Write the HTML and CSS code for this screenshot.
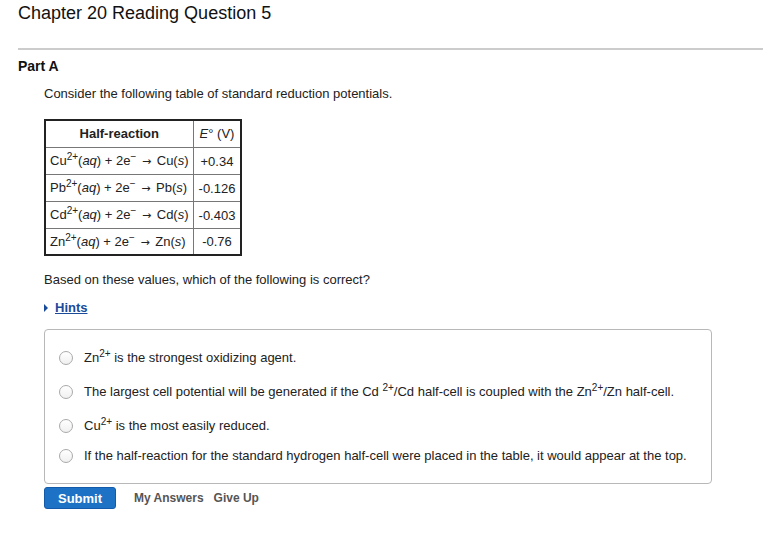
FILE: index.html
```html
<!DOCTYPE html>
<html>
	<head>
		<meta charset="utf-8">
		<title>Chapter 20 Reading Question 5</title>
		<link rel="stylesheet" href="styles.css">
	</head>
	<body>
		<h1 class="title">Chapter 20 Reading Question 5</h1>
		<div class="part">
			<h2 class="partTitle">Part A</h2>
			<div class="question">
				<p class="intro">Consider the following table of standard reduction potentials.</p>
				<table class="potentials">
					<tr>
						<th>Half-reaction</th>
						<th class="ev"><i>E</i>&deg; (V)</th>
					</tr>
					<tr>
						<td>Cu<sup>2+</sup>(<i>aq</i>) + 2e<sup>&minus;</sup> <span class="to">&rarr;</span> Cu(<i>s</i>)</td>
						<td class="val">+0.34</td>
					</tr>
					<tr>
						<td>Pb<sup>2+</sup>(<i>aq</i>) + 2e<sup>&minus;</sup> <span class="to">&rarr;</span> Pb(<i>s</i>)</td>
						<td class="val">-0.126</td>
					</tr>
					<tr>
						<td>Cd<sup>2+</sup>(<i>aq</i>) + 2e<sup>&minus;</sup> <span class="to">&rarr;</span> Cd(<i>s</i>)</td>
						<td class="val">-0.403</td>
					</tr>
					<tr>
						<td>Zn<sup>2+</sup>(<i>aq</i>) + 2e<sup>&minus;</sup> <span class="to">&rarr;</span> Zn(<i>s</i>)</td>
						<td class="val">-0.76</td>
					</tr>
				</table>
				<p class="ask">Based on these values, which of the following is correct?</p>
				<a class="hints" href="#"><span class="arrow"></span>Hints</a>
				<div class="choices">
					<label class="choice"><span class="radio"></span><span>Zn<sup>2+</sup> is the strongest oxidizing agent.</span></label>
					<label class="choice"><span class="radio"></span><span>The largest cell potential will be generated if the Cd <sup>2+</sup>/Cd half-cell is coupled with the Zn<sup>2+</sup>/Zn half-cell.</span></label>
					<label class="choice"><span class="radio"></span><span>Cu<sup>2+</sup> is the most easily reduced.</span></label>
					<label class="choice last"><span class="radio"></span><span>If the half-reaction for the standard hydrogen half-cell were placed in the table, it would appear at the top.</span></label>
				</div>
				<div class="actions">
					<button class="submit">Submit</button>
					<a class="link" href="#">My Answers</a>
					<a class="link" href="#">Give Up</a>
				</div>
			</div>
		</div>
	</body>
</html>
```

FILE: styles.css
```css
* {
	margin: 0;
	padding: 0;
	box-sizing: border-box;
}

body {
	font-family: "Liberation Sans", Arial, sans-serif;
	color: #222;
	background: #fff;
	font-size: 13px;
}

sup {
	font-size: 10px;
	line-height: 0;
	vertical-align: 5px;
}

.title {
	font-size: 18px;
	font-weight: normal;
	color: #111;
	line-height: 24px;
	padding-top: 1px;
	height: 50px;
	border-bottom: 2px solid #ccc;
	margin-left: 18px;
}

.part {
	padding: 8px 0 0 18px;
}

.partTitle {
	font-size: 14px;
	font-weight: bold;
	color: #111;
	line-height: 17px;
}

.question {
	padding-left: 26px;
}

.intro {
	margin-top: 11px;
	line-height: 16px;
}

/* 电位表 */
.potentials {
	margin-top: 17px;
	border-collapse: collapse;
	border: 2px solid #222;
	font-size: 13px;
}

.potentials th,
.potentials td {
	border: 1px solid #777;
	padding: 0 4px;
	line-height: 15px;
}

.potentials th {
	height: 27px;
	font-weight: bold;
	text-align: center;
}

.potentials th.ev {
	font-weight: normal;
}

.potentials td {
	height: 27px;
	padding-top: 1px;
}

.potentials td.val {
	text-align: center;
	padding: 1px 5px 0;
}

.potentials .to {
	font-family: "DejaVu Sans", sans-serif;
	font-size: 11px;
	margin: 0 2px;
}

.ask {
	margin-top: 16px;
	line-height: 16px;
}

.hints {
	display: inline-flex;
	align-items: center;
	margin-top: 12px;
	font-weight: bold;
	color: #1a4a9a;
	text-decoration: underline;
	line-height: 16px;
}

.hints .arrow {
	width: 0;
	height: 0;
	border-top: 4px solid transparent;
	border-bottom: 4px solid transparent;
	border-left: 4px solid #1a4a9a;
	margin-right: 7px;
}

/* 选项框 */
.choices {
	margin-top: 13px;
	width: 668px;
	border: 1px solid #b8b8b8;
	border-radius: 4px;
	padding: 19px 0 19px 14px;
	display: flex;
	flex-direction: column;
	gap: 16px;
}

.choice {
	display: flex;
	align-items: center;
	line-height: 18px;
}

/* 最后一项没有上标,行更矮 */
.choice.last {
	margin-top: -3px;
	line-height: 16px;
}

.radio {
	width: 14px;
	height: 14px;
	border: 1px solid #aaa;
	border-radius: 50%;
	background: linear-gradient(#fff, #f0f0f0);
	margin-right: 11px;
	flex-shrink: 0;
}

.actions {
	display: flex;
	align-items: center;
	margin-top: 3px;
}

.submit {
	font-family: "Liberation Sans", Arial, sans-serif;
	width: 72px;
	height: 22px;
	background: #1d72c6;
	border: 1px solid #135ba8;
	border-radius: 3px;
	color: #fff;
	font-weight: bold;
	font-size: 13px;
}

.link {
	font-weight: bold;
	font-size: 12px;
	color: #555;
	text-decoration: none;
	margin-left: 18px;
}

.link + .link {
	margin-left: 10px;
}
```
